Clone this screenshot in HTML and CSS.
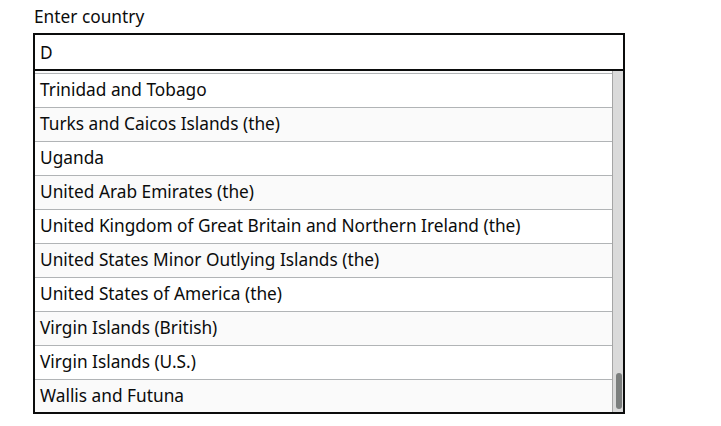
FILE: index.html
```html
<!DOCTYPE html>
<html lang="en">
<head>
    <meta charset="UTF-8">
    <meta name="viewport" content="width=device-width, initial-scale=1.0">
    <title>Enter country</title>
    <link rel="stylesheet" href="styles.css">
</head>
<body>

    <div class="field">
        <label class="label" for="country">Enter country</label>
        <div class="autocomplete">
            <input class="input" id="country" type="text" value="D" autocomplete="off">
            <div class="menu">
                <ul class="options">
                    <li class="option">Tonga</li>
                    <li class="option">Trinidad and Tobago</li>
                    <li class="option">Turks and Caicos Islands (the)</li>
                    <li class="option">Uganda</li>
                    <li class="option">United Arab Emirates (the)</li>
                    <li class="option">United Kingdom of Great Britain and Northern Ireland (the)</li>
                    <li class="option">United States Minor Outlying Islands (the)</li>
                    <li class="option">United States of America (the)</li>
                    <li class="option">Virgin Islands (British)</li>
                    <li class="option">Virgin Islands (U.S.)</li>
                    <li class="option option--last">Wallis and Futuna</li>
                </ul>
                <div class="scrollbar">
                    <div class="thumb"></div>
                </div>
            </div>
        </div>
    </div>

</body>
</html>
```

FILE: styles.css
```css
body {
    font-family: "Noto Sans", Arial, sans-serif;
    color: #0b0c0c;
    background-color: #fff;
    margin: 0;
    padding: 5px 0 0 33px;
}
.field {
    width: 592px;
}
.label {
    display: block;
    font-size: 17.3px;
    line-height: 23px;
    margin: 0 0 5px 1px;
}
.input {
    display: block;
    box-sizing: border-box;
    width: 100%;
    height: 38px;
    margin: 0;
    padding: 0 5px;
    border: 2px solid #0b0c0c;
    border-radius: 0;
    font-family: inherit;
    font-size: 17.3px;
    line-height: 24px;
    color: #0b0c0c;
    outline: none;
}
.menu {
    display: flex;
    height: 341px;
    border: 2px solid #0b0c0c;
    border-top: 0;
}
.options {
    flex: 1;
    display: flex;
    flex-direction: column;
    justify-content: flex-end;
    overflow: hidden;
    list-style: none;
    margin: 0;
    padding: 0;
}
.option {
    flex: none;
    height: 33px;
    line-height: 32px;
    padding: 0 5px;
    border-bottom: 1px solid #b1b4b6;
    font-size: 17.3px;
    white-space: nowrap;
    background-color: #fafafa;
}
.option:nth-child(even) {
    background-color: #fff;
}
.option--last {
    height: 32px;
    border-bottom: 0;
}
.scrollbar {
    flex: none;
    width: 11px;
    display: flex;
    flex-direction: column;
    justify-content: flex-end;
    padding: 0 0 3px 3px;
    box-sizing: border-box;
    background-color: #dadada;
    border-left: 1px solid #a5a5a5;
}
.thumb {
    width: 6px;
    height: 36px;
    border-radius: 3px;
    background-color: #7b7e7d;
}
```
